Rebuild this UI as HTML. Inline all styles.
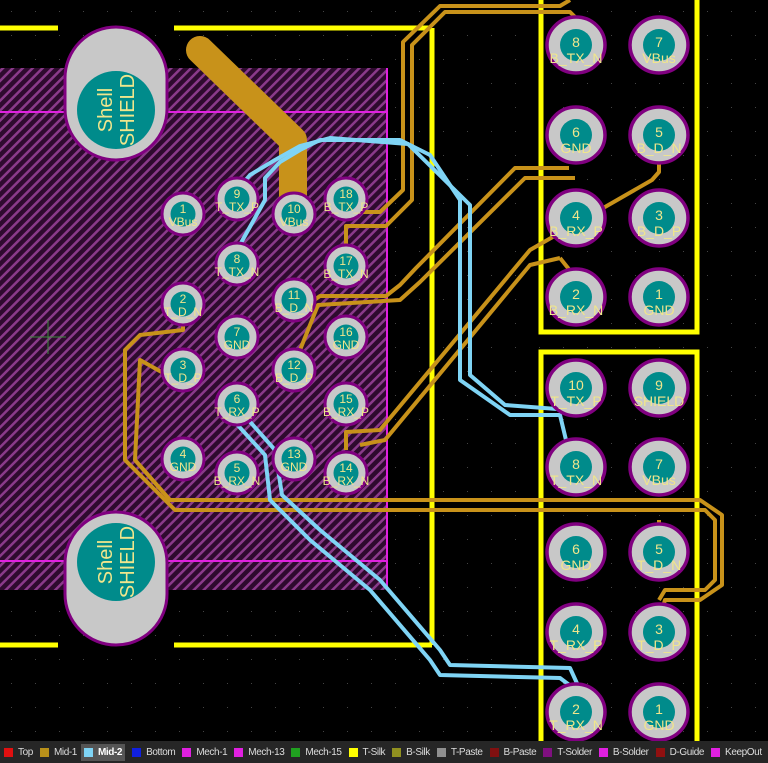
<!DOCTYPE html>
<html><head><style>
html,body{margin:0;padding:0;background:#000;width:768px;height:763px;overflow:hidden}
svg{display:block}
.bar{position:absolute;left:0;top:741px;width:768px;height:22px;background:#262626;font:10px "Liberation Sans",sans-serif;color:#ddd;display:flex;align-items:center;white-space:nowrap;letter-spacing:-0.4px;overflow:hidden}
.bar span{display:flex;align-items:center;margin-left:4px;margin-right:3px;white-space:nowrap}
.bar i{display:inline-block;width:9px;height:9px;margin-right:5px}
</style></head><body>
<svg width="768" height="741" viewBox="0 0 768 741" font-family="Liberation Sans, sans-serif">
<defs>
<pattern id="h" width="7" height="7" patternUnits="userSpaceOnUse" patternTransform="rotate(45)">
<rect width="7" height="7" fill="#2e0a2e"/><rect width="2.5" height="7" fill="#8a3a8a"/>
</pattern>
<pattern id="g" width="24" height="24" patternUnits="userSpaceOnUse">
<rect x="11" y="11" width="1" height="1" fill="#444"/>
</pattern>
<g id="sp"><circle r="21" fill="#c8c8c8" stroke="#800080" stroke-width="3"/><circle r="12.5" fill="#008b8b"/></g>
<g id="bp"><ellipse rx="29" ry="28" fill="#c8c8c8" stroke="#800080" stroke-width="3.5"/><circle r="16" fill="#008b8b"/></g>
</defs>
<rect width="768" height="741" fill="url(#g)"/>
<rect x="0" y="68" width="388" height="522" fill="url(#h)"/>
<line x1="387" y1="68" x2="387" y2="590" stroke="#e020e0" stroke-width="2"/>
<line x1="0" y1="112" x2="388" y2="112" stroke="#e020e0" stroke-width="2"/>
<line x1="0" y1="561" x2="388" y2="561" stroke="#e020e0" stroke-width="2"/>
<g stroke="#ffff00" stroke-width="5" fill="none">
<line x1="0" y1="28" x2="58" y2="28"/><line x1="174" y1="28" x2="432" y2="28"/>
<line x1="432" y1="28" x2="432" y2="645"/>
<line x1="0" y1="645" x2="58" y2="645"/><line x1="174" y1="645" x2="432" y2="645"/>
<polyline points="541,0 541,332 697,332 697,0"/>
<polyline points="541,741 541,352 697,352 697,741"/>
</g>
<g stroke="#c8921a" stroke-width="4" fill="none" stroke-linejoin="round">
<polyline points="200,50 293,140 293,200" stroke-width="28" stroke-linecap="round"/>
<polyline points="570,0 560,6 440,6 403,42 403,190 380,212 346,212"/>
<polyline points="576,18 570,12 445,12 412,45 412,200 386,226 346,226 346,245"/>
<polyline points="569,168 515,168 416,268 400,285 386,296 320,296 300,310"/>
<polyline points="575,178 525,178 420,282 400,300 318,305 300,350 294,362"/>
<polyline points="659,160 659,172 652,180 530,250 380,430 346,432 346,450"/>
<polyline points="560,258 530,265 385,440 360,445"/>
<polyline points="576,280 568,268 560,258"/>
<polyline points="183,318 183,330 140,335 125,350 125,460 175,510 705,510 715,520 715,580 705,590 665,590 659,600"/>
<polyline points="183,384 140,360 135,460 170,500 700,500 722,515 722,585 700,600 665,600 659,620"/>
<polyline points="659,535 659,520"/>
</g>
<g stroke="#7fd4f5" stroke-width="4" fill="none" stroke-linejoin="round">
<polyline points="237,250 265,200 265,178 280,162 300,150 320,140 400,140 430,155 460,200 460,380 510,415 560,415 566,440"/>
<polyline points="237,190 250,175 275,160 300,146 330,138 408,144 470,205 470,375 505,405 570,410"/>
<polyline points="233,420 265,455 270,500 310,540 370,590 430,660 440,675 560,678 576,690"/>
<polyline points="244,415 275,450 282,495 320,530 380,580 440,650 450,665 570,668 580,690"/>
</g>
<g>
<rect x="65" y="27" width="102" height="133" rx="51" fill="#c8c8c8" stroke="#800080" stroke-width="3"/>
<circle cx="116" cy="110" r="39" fill="#008b8b"/>
<text transform="translate(112,110) rotate(-90)" text-anchor="middle" font-size="20" fill="#f0e68c">Shell</text>
<text transform="translate(134,110) rotate(-90)" text-anchor="middle" font-size="20" fill="#f0e68c">SHIELD</text>
<rect x="65" y="512" width="102" height="133" rx="51" fill="#c8c8c8" stroke="#800080" stroke-width="3"/>
<circle cx="116" cy="562" r="39" fill="#008b8b"/>
<text transform="translate(112,562) rotate(-90)" text-anchor="middle" font-size="20" fill="#f0e68c">Shell</text>
<text transform="translate(134,562) rotate(-90)" text-anchor="middle" font-size="20" fill="#f0e68c">SHIELD</text>
</g>
<g text-anchor="middle" font-size="12" fill="#f0e68c">
<g transform="translate(183,214)"><use href="#sp"/><text y="-1">1</text><text y="12">VBus</text></g>
<g transform="translate(237,199)"><use href="#sp"/><text y="-1">9</text><text y="12">T_TX_P</text></g>
<g transform="translate(294,214)"><use href="#sp"/><text y="-1">10</text><text y="12">VBus</text></g>
<g transform="translate(346,199)"><use href="#sp"/><text y="-1">18</text><text y="12">B_TX_P</text></g>
<g transform="translate(237,264)"><use href="#sp"/><text y="-1">8</text><text y="12">T_TX_N</text></g>
<g transform="translate(346,266)"><use href="#sp"/><text y="-1">17</text><text y="12">B_TX_N</text></g>
<g transform="translate(183,304)"><use href="#sp"/><text y="-1">2</text><text y="12">T_D_N</text></g>
<g transform="translate(294,300)"><use href="#sp"/><text y="-1">11</text><text y="12">B_D_N</text></g>
<g transform="translate(237,337)"><use href="#sp"/><text y="-1">7</text><text y="12">GND</text></g>
<g transform="translate(346,337)"><use href="#sp"/><text y="-1">16</text><text y="12">GND</text></g>
<g transform="translate(183,370)"><use href="#sp"/><text y="-1">3</text><text y="12">T_D_P</text></g>
<g transform="translate(294,370)"><use href="#sp"/><text y="-1">12</text><text y="12">B_D_P</text></g>
<g transform="translate(237,404)"><use href="#sp"/><text y="-1">6</text><text y="12">T_RX_P</text></g>
<g transform="translate(346,404)"><use href="#sp"/><text y="-1">15</text><text y="12">B_RX_P</text></g>
<g transform="translate(183,459)"><use href="#sp"/><text y="-1">4</text><text y="12">GND</text></g>
<g transform="translate(294,459)"><use href="#sp"/><text y="-1">13</text><text y="12">GND</text></g>
<g transform="translate(237,473)"><use href="#sp"/><text y="-1">5</text><text y="12">B_RX_N</text></g>
<g transform="translate(346,473)"><use href="#sp"/><text y="-1">14</text><text y="12">B_RX_N</text></g>
</g>
<g text-anchor="middle" font-size="14" fill="#f0e68c">
<g transform="translate(576,45)"><use href="#bp"/><text y="2">8</text><text y="18">B_TX_N</text></g>
<g transform="translate(659,45)"><use href="#bp"/><text y="2">7</text><text y="18">VBus</text></g>
<g transform="translate(576,135)"><use href="#bp"/><text y="2">6</text><text y="18">GND</text></g>
<g transform="translate(659,135)"><use href="#bp"/><text y="2">5</text><text y="18">B_D_N</text></g>
<g transform="translate(576,218)"><use href="#bp"/><text y="2">4</text><text y="18">B_RX_P</text></g>
<g transform="translate(659,218)"><use href="#bp"/><text y="2">3</text><text y="18">B_D_P</text></g>
<g transform="translate(576,297)"><use href="#bp"/><text y="2">2</text><text y="18">B_RX_N</text></g>
<g transform="translate(659,297)"><use href="#bp"/><text y="2">1</text><text y="18">GND</text></g>
<g transform="translate(576,388)"><use href="#bp"/><text y="2">10</text><text y="18">T_TX_P</text></g>
<g transform="translate(659,388)"><use href="#bp"/><text y="2">9</text><text y="18">SHIELD</text></g>
<g transform="translate(576,467)"><use href="#bp"/><text y="2">8</text><text y="18">T_TX_N</text></g>
<g transform="translate(659,467)"><use href="#bp"/><text y="2">7</text><text y="18">VBus</text></g>
<g transform="translate(576,552)"><use href="#bp"/><text y="2">6</text><text y="18">GND</text></g>
<g transform="translate(659,552)"><use href="#bp"/><text y="2">5</text><text y="18">T_D_N</text></g>
<g transform="translate(576,632)"><use href="#bp"/><text y="2">4</text><text y="18">T_RX_P</text></g>
<g transform="translate(659,632)"><use href="#bp"/><text y="2">3</text><text y="18">T_D_P</text></g>
<g transform="translate(576,712)"><use href="#bp"/><text y="2">2</text><text y="18">T_RX_N</text></g>
<g transform="translate(659,712)"><use href="#bp"/><text y="2">1</text><text y="18">GND</text></g>
</g>
<g stroke="#3a8a3a" stroke-width="1"><line x1="30" y1="337" x2="66" y2="337"/><line x1="48" y1="320" x2="48" y2="354"/></g>
</svg>
<div class="bar">
<span><i style="background:#e01010"></i>Top</span>
<span><i style="background:#b8901a"></i>Mid-1</span>
<span style="background:#555;padding:3px 3px;margin-left:1px"><i style="background:#7fd4f5"></i><b style="color:#fff">Mid-2</b></span>
<span><i style="background:#1020e0"></i>Bottom</span>
<span><i style="background:#e020e0"></i>Mech-1</span>
<span><i style="background:#e020e0"></i>Mech-13</span>
<span><i style="background:#20a020"></i>Mech-15</span>
<span><i style="background:#ffff00"></i>T-Silk</span>
<span><i style="background:#909020"></i>B-Silk</span>
<span><i style="background:#909090"></i>T-Paste</span>
<span><i style="background:#801010"></i>B-Paste</span>
<span><i style="background:#801080"></i>T-Solder</span>
<span><i style="background:#e020e0"></i>B-Solder</span>
<span><i style="background:#901010"></i>D-Guide</span>
<span><i style="background:#e020e0"></i>KeepOut</span>
</div>
</body></html>
